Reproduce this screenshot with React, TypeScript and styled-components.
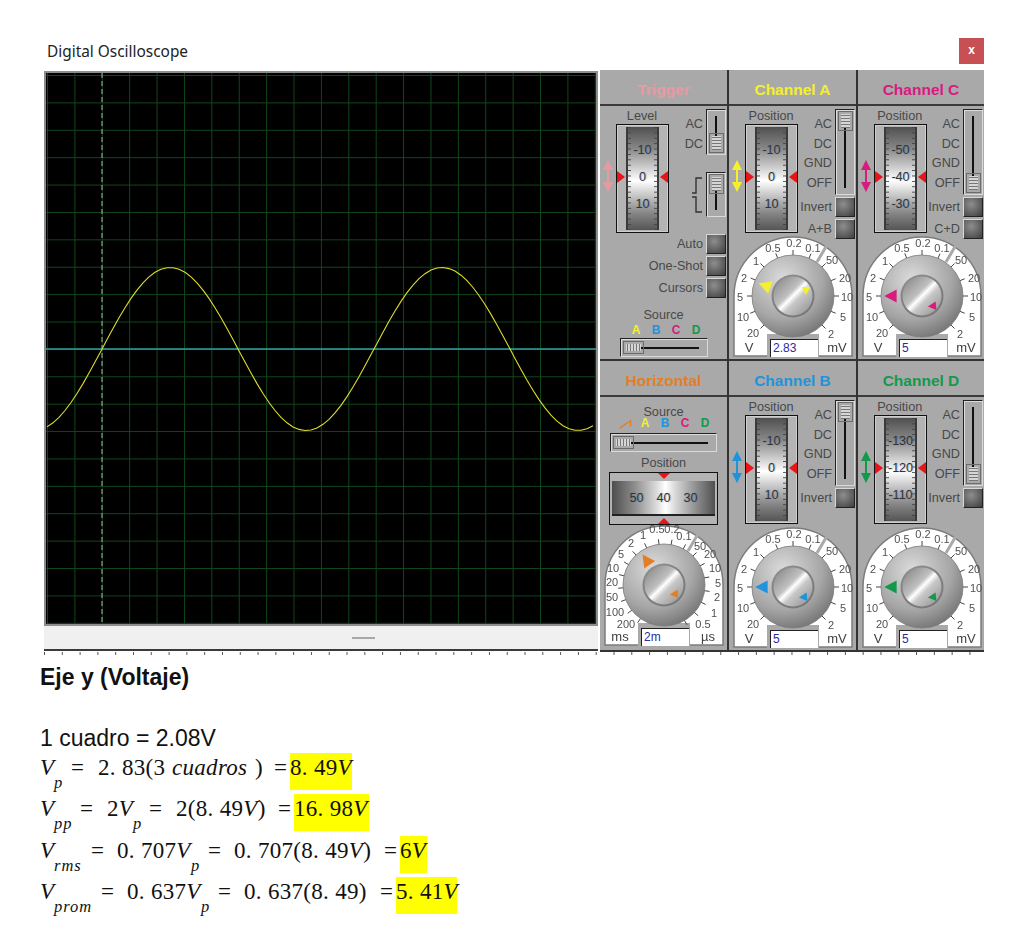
import styled, { createGlobalStyle } from "styled-components";

const GlobalStyle = createGlobalStyle`
  html, body {
    margin: 0;
    background: #ffffff;
  }
  #root {
    width: 1022px;
    height: 942px;
    overflow: hidden;
  }
`;

const COLORS = {
  trigger: "#e79aa2",
  a: "#f4f02e",
  b: "#1f93dc",
  c: "#d81b7f",
  d: "#13994c",
  horizontal: "#e57d26",
};

type DialLabel = [string, number, number];

const voltLabels: DialLabel[] = [
  ["0.2", 1, -53],
  ["0.5", -20, -48],
  ["0.1", 20, -48],
  ["1", -37, -35],
  ["2", -49, -18],
  ["5", -53, 1],
  ["10", -50, 21],
  ["20", -40, 37],
  ["50", 39, -36],
  ["20", 52, -18],
  ["10", 54, 1],
  ["5", 50, 21],
  ["2", 38, 38],
];
const voltTicks = [90, 112, 135, 157, 180, 202, 225, 67, 45, 22, 0, -22, -45];

const timeLabels: DialLabel[] = [
  ["0.5", -7, -56],
  ["0.2", 8, -56],
  ["0.1", 20, -49],
  ["50", 36, -39],
  ["20", 46, -31],
  ["10", 51, -17],
  ["5", 54, -2],
  ["2", 53, 12],
  ["1", 50, 28],
  ["0.5", 39, 39],
  ["1", -21, -50],
  ["2", -33, -42],
  ["5", -43, -31],
  ["10", -51, -17],
  ["20", -52, -3],
  ["50", -52, 12],
  ["100", -49, 27],
  ["200", -38, 39],
];
const timeTicks = [97, 115, 133, 150, 167, 184, 201, 218, 235, 80, 62, 45, 28, 10, -8, -25, -42, -60];

const toPoint = (deg: number, r: number) => {
  const rad = (deg * Math.PI) / 180;
  return [r * Math.cos(rad), -r * Math.sin(rad)];
};

// triangle centred on (cx, cy) whose tip looks along deg
const triangle = (cx: number, cy: number, deg: number, size: number) => {
  const [tx, ty] = toPoint(deg, size * 0.6);
  const [ax, ay] = toPoint(deg + 125, size * 0.62);
  const [bx, by] = toPoint(deg - 125, size * 0.62);
  return `${cx + tx},${cy + ty} ${cx + ax},${cy + ay} ${cx + bx},${cy + by}`;
};

const tracePath = () => {
  const points: string[] = [];
  for (let x = 47; x <= 596; x += 6) {
    const y = 349 - 81.5 * Math.sin((2 * Math.PI * (x - 102)) / 272);
    points.push(`${x},${y.toFixed(1)}`);
  }
  return `M${points.join(" L")}`;
};

function Dial({
  color,
  labels,
  ticks,
  left,
  right,
  value,
  big,
  small,
}: {
  color: string;
  labels: DialLabel[];
  ticks: number[];
  left: string;
  right: string;
  value: string;
  big: [number, number, number];
  small: [number, number, number];
}) {
  return (
    <DialBox>
      <svg width="122" height="124" viewBox="-61 -62 122 124">
        <defs>
          <radialGradient id="knob" cx="38%" cy="30%" r="80%">
            <stop offset="0%" stopColor="#dcdcdc" />
            <stop offset="60%" stopColor="#a6a6a6" />
            <stop offset="100%" stopColor="#6a6a6a" />
          </radialGradient>
          <linearGradient id="cap" x1="0" y1="0" x2="1" y2="1">
            <stop offset="0%" stopColor="#808080" />
            <stop offset="42%" stopColor="#c0c0c0" />
            <stop offset="50%" stopColor="#ffffff" />
            <stop offset="60%" stopColor="#c8c8c8" />
            <stop offset="100%" stopColor="#8a8a8a" />
          </linearGradient>
        </defs>
        <path
          d="M-59 60 V0 A59 59 0 0 1 59 0 V60 Z"
          fill="#ffffff"
          stroke="#7c7c7c"
          strokeWidth="1.5"
        />
        <rect x="-26" y="38" width="52" height="24" fill="#a9a9a9" />
        <line x1="24" y1="-34" x2="34" y2="-51" stroke="#a9a9a9" strokeWidth="3" />
        {ticks.map((deg) => {
          const [x1, y1] = toPoint(deg, 40);
          const [x2, y2] = toPoint(deg, 46);
          return (
            <line key={deg} x1={x1} y1={y1} x2={x2} y2={y2} stroke="#444444" strokeWidth="1" />
          );
        })}
        {labels.map(([text, x, y], i) => (
          <text
            key={i}
            x={x}
            y={y + 4}
            textAnchor="middle"
            fontFamily="'Liberation Sans', sans-serif"
            fontSize="11"
            fill="#505050"
          >
            {text}
          </text>
        ))}
        <text
          x={-44}
          y={56}
          textAnchor="middle"
          fontFamily="'Liberation Sans', sans-serif"
          fontSize="13"
          fill="#404040"
        >
          {left}
        </text>
        <text
          x={44}
          y={56}
          textAnchor="middle"
          fontFamily="'Liberation Sans', sans-serif"
          fontSize="13"
          fill="#404040"
        >
          {right}
        </text>
        <circle r="41" fill="url(#knob)" stroke="#7a7a7a" strokeWidth="0.8" />
        <circle r="21.5" fill="#5c5c5c" opacity="0.6" />
        <circle r="19.5" fill="url(#cap)" />
        <polygon points={triangle(big[0], big[1], big[2], 13)} fill={color} />
        <polygon points={triangle(small[0], small[1], small[2], 8.5)} fill={color} />
      </svg>
      <ValueBox>{value}</ValueBox>
    </DialBox>
  );
}

function Fader({ labels }: { labels: string[] }) {
  return (
    <FaderFrame>
      <Marker $side="left" />
      <Drum>
        {labels.map((label) => (
          <DrumLabel key={label}>{label}</DrumLabel>
        ))}
      </Drum>
      <Marker $side="right" />
    </FaderFrame>
  );
}

function UpDown({ color }: { color: string }) {
  return (
    <ArrowBox>
      <svg width="12" height="32" viewBox="0 0 12 32">
        <path d="M6 0 L11 10 H1 Z M6 32 L11 22 H1 Z" fill={color} />
        <line x1="6" y1="8" x2="6" y2="24" stroke={color} strokeWidth="2" />
      </svg>
    </ArrowBox>
  );
}

function PositionBlock({
  title,
  color,
  labels,
}: {
  title: string;
  color: string;
  labels: string[];
}) {
  return (
    <LeftBlock>
      <Caption $pad={14}>{title}</Caption>
      <FaderRow>
        <UpDown color={color} />
        <Fader labels={labels} />
      </FaderRow>
    </LeftBlock>
  );
}

function Channel({
  name,
  color,
  labels,
  thumb,
  second,
  value,
  big,
  small,
}: {
  name: string;
  color: string;
  labels: string[];
  thumb: "start" | "end";
  second?: string;
  value: string;
  big: [number, number, number];
  small: [number, number, number];
}) {
  return (
    <Cell>
      <Header $color={color}>{name}</Header>
      <Body>
        <TopRow>
          <PositionBlock title="Position" color={color} labels={labels} />
          <RightBlock>
            <SwitchRow>
              <CouplingLabels>
                <span>AC</span>
                <span>DC</span>
                <span>GND</span>
                <span>OFF</span>
              </CouplingLabels>
              <Selector $height={86} $thumb={thumb}>
                <Thumb />
              </Selector>
            </SwitchRow>
            <ButtonRow>
              Invert
              <PushButton />
            </ButtonRow>
            {second && (
              <ButtonRow>
                {second}
                <PushButton />
              </ButtonRow>
            )}
          </RightBlock>
        </TopRow>
        <Dial
          color={color}
          labels={voltLabels}
          ticks={voltTicks}
          left="V"
          right="mV"
          value={value}
          big={big}
          small={small}
        />
      </Body>
    </Cell>
  );
}

function SourceLetters({ ramp }: { ramp?: boolean }) {
  return (
    <Letters $ramp={ramp}>
      {ramp && (
        <svg width="18" height="11" viewBox="0 0 18 12">
          <path d="M2 11 L14 3 V9" fill="none" stroke={COLORS.horizontal} strokeWidth="1.5" />
        </svg>
      )}
      <Letter $color={COLORS.a}>A</Letter>
      <Letter $color={COLORS.b}>B</Letter>
      <Letter $color={COLORS.c}>C</Letter>
      <Letter $color={COLORS.d}>D</Letter>
    </Letters>
  );
}

export default function App() {
  return (
    <Page>
      <GlobalStyle />
      <TitleBar>
        <Title>Digital Oscilloscope</Title>
        <CloseButton>x</CloseButton>
      </TitleBar>
      <Instrument>
        <ScreenColumn>
          <Screen>
            <svg width="550" height="551" viewBox="46 73 550 551">
              <line x1="102" y1="73" x2="102" y2="624" stroke="#b0b0b0" strokeDasharray="5 3" />
              <line x1="46" y1="349" x2="596" y2="349" stroke="#2aa5a5" strokeWidth="1.4" />
              <path d={tracePath()} fill="none" stroke="#dcdc2c" strokeWidth="1.1" />
            </svg>
          </Screen>
          <StatusBar>
            <Grip />
          </StatusBar>
        </ScreenColumn>
        <Controls>
          <Cell>
            <Header $color={COLORS.trigger}>Trigger</Header>
            <Body>
              <TopRow $height={191}>
                <PositionBlock title="Level" color={COLORS.trigger} labels={["-10", "0", "10"]} />
                <RightBlock>
                  <SwitchRow>
                    <CouplingLabels>
                      <span>AC</span>
                      <span>DC</span>
                    </CouplingLabels>
                    <Selector $height={46} $thumb="end">
                      <Thumb />
                    </Selector>
                  </SwitchRow>
                  <EdgeRow>
                    <svg width="12" height="45" viewBox="0 0 12 45">
                      <path
                        d="M1 21 H5 V6 H11 M1 25 H5 V40 H11"
                        fill="none"
                        stroke="#333333"
                        strokeWidth="1.4"
                      />
                    </svg>
                    <Selector $height={45} $thumb="start">
                      <Thumb />
                    </Selector>
                  </EdgeRow>
                  <ButtonStack>
                    <ButtonRow>
                      Auto
                      <PushButton />
                    </ButtonRow>
                    <ButtonRow>
                      One-Shot
                      <PushButton />
                    </ButtonRow>
                    <ButtonRow>
                      Cursors
                      <PushButton />
                    </ButtonRow>
                  </ButtonStack>
                </RightBlock>
              </TopRow>
              <CenteredBlock $top={11}>
                <Caption>Source</Caption>
                <SourceLetters />
                <SlideSwitch $width={88} $top={0}>
                  <SlideThumb />
                </SlideSwitch>
              </CenteredBlock>
            </Body>
          </Cell>
          <Channel
            name="Channel A"
            color={COLORS.a}
            labels={["-10", "0", "10"]}
            thumb="start"
            second="A+B"
            value="2.83"
            big={[-27, -10, 160]}
            small={[13, -6, -90]}
          />
          <Channel
            name="Channel C"
            color={COLORS.c}
            labels={["-50", "-40", "-30"]}
            thumb="end"
            second="C+D"
            value="5"
            big={[-30, 0, 180]}
            small={[11, 10, 185]}
          />
          <Cell>
            <Header $color={COLORS.horizontal}>Horizontal</Header>
            <Body>
              <CenteredBlock $top={10}>
                <Caption $h={11}>Source</Caption>
                <SourceLetters ramp />
                <SlideSwitch $width={107} $top={4}>
                  <SlideThumb />
                </SlideSwitch>
                <Caption $top={4}>Position</Caption>
                <WideFader>
                  <WideMarker $side="top" />
                  <WideDrum>
                    <span>50</span>
                    <span>40</span>
                    <span>30</span>
                  </WideDrum>
                  <WideMarker $side="bottom" />
                </WideFader>
              </CenteredBlock>
              <Dial
                color={COLORS.horizontal}
                labels={timeLabels}
                ticks={timeTicks}
                left="ms"
                right="µs"
                value="2m"
                big={[-17, -24, 125]}
                small={[11, 9, 185]}
              />
            </Body>
          </Cell>
          <Channel
            name="Channel B"
            color={COLORS.b}
            labels={["-10", "0", "10"]}
            thumb="start"
            value="5"
            big={[-30, 0, 180]}
            small={[11, 10, 185]}
          />
          <Channel
            name="Channel D"
            color={COLORS.d}
            labels={["-130", "-120", "-110"]}
            thumb="end"
            value="5"
            big={[-30, 0, 180]}
            small={[11, 10, 185]}
          />
        </Controls>
      </Instrument>
      <RulerTicks />
      <Notes>
        <Heading>Eje y (Voltaje)</Heading>
        <Plain>1 cuadro = 2.08V</Plain>
        <MathLine>
          <Run $w={14} $italic>V</Run>
          <Sub $w={17}>p</Sub>
          <Run $w={27}>=</Run>
          <Run $w={74}>2. 83(3</Run>
          <Run $w={83} $italic>cuadros</Run>
          <Run $w={19}>)</Run>
          <Run $w={16}>=</Run>
          <Mark $w={62}>8. 49<i>V</i></Mark>
        </MathLine>
        <MathLine>
          <Run $w={14} $italic>V</Run>
          <Sub $w={26}>pp</Sub>
          <Run $w={27}>=</Run>
          <Run $w={26}>2<i>V</i></Run>
          <Sub $w={16}>p</Sub>
          <Run $w={27}>=</Run>
          <Run $w={102}>2(8. 49<i>V</i>)</Run>
          <Run $w={16}>=</Run>
          <Mark $w={75}>16. 98<i>V</i></Mark>
        </MathLine>
        <MathLine>
          <Run $w={14} $italic>V</Run>
          <Sub $w={37}>rms</Sub>
          <Run $w={26}>=</Run>
          <Run $w={74}>0. 707<i>V</i></Run>
          <Sub $w={17}>p</Sub>
          <Run $w={26}>=</Run>
          <Run $w={150}>0. 707(8. 49<i>V</i>)</Run>
          <Run $w={16}>=</Run>
          <Mark $w={27}>6<i>V</i></Mark>
        </MathLine>
        <MathLine>
          <Run $w={14} $italic>V</Run>
          <Sub $w={47}>prom</Sub>
          <Run $w={26}>=</Run>
          <Run $w={74}>0. 637<i>V</i></Run>
          <Sub $w={17}>p</Sub>
          <Run $w={26}>=</Run>
          <Run $w={136}>0. 637(8. 49)</Run>
          <Run $w={16}>=</Run>
          <Mark $w={61}>5. 41<i>V</i></Mark>
        </MathLine>
      </Notes>
    </Page>
  );
}

const Page = styled.div`
  width: 1022px;
  height: 942px;
  padding-top: 38px;
  box-sizing: border-box;
  background: #ffffff;
  font-family: "Liberation Sans", sans-serif;
`;

const TitleBar = styled.div`
  display: flex;
  justify-content: space-between;
  align-items: flex-start;
  height: 32px;
  margin: 0 38px 0 47px;
`;

const Title = styled.div`
  font-family: "Noto Sans", "Open Sans", sans-serif;
  font-size: 15.4px;
  line-height: 27px;
  color: #222222;
`;

const CloseButton = styled.div`
  width: 25px;
  height: 26px;
  background: #c75054;
  color: #ffffff;
  font-size: 12px;
  font-weight: 700;
  line-height: 25px;
  text-align: center;
`;

const Instrument = styled.div`
  display: flex;
  width: 940px;
  margin-left: 44px;
  height: 582px;
  filter: blur(0.35px);
`;

const ScreenColumn = styled.div`
  width: 556px;
  padding-top: 1px;
  box-sizing: border-box;
`;

const Screen = styled.div`
  position: relative;
  width: 554px;
  height: 555px;
  box-sizing: border-box;
  border: 2px solid #8d8d8d;
  overflow: hidden;
  background-color: #000000;
  background-image: linear-gradient(to right, #10471a 1.4px, transparent 1.4px),
    linear-gradient(to bottom, #10471a 1.4px, transparent 1.4px);
  background-size: 27.4px 27.4px;
  background-position: 1px 2px;

  svg {
    display: block;
  }
`;

const StatusBar = styled.div`
  display: flex;
  align-items: center;
  justify-content: center;
  width: 554px;
  height: 25px;
  background: #f0f0f0;
  border-bottom: 2px solid #3a3a3a;
  box-sizing: border-box;
  padding-left: 85px;
`;

const Grip = styled.div`
  width: 23px;
  height: 2px;
  background: #a8a8a8;
`;

const RulerTicks = styled.div`
  width: 940px;
  height: 3px;
  margin-left: 44px;
  background-image: linear-gradient(to right, #555555 1px, transparent 1px);
  background-size: 17.8px 3px;
`;

const Controls = styled.div`
  display: grid;
  grid-template-columns: 129px 129px 126px;
  grid-template-rows: 291px 291px;
  background: #a9a9a9;
`;

const Cell = styled.div`
  background: #a9a9a9;
  border-right: 2px solid #333333;
  border-bottom: 2px solid #333333;
  box-sizing: border-box;
  overflow: hidden;
  color: #484848;
  font-size: 12.7px;

  &:nth-child(3n) {
    border-right: 0;
  }
`;

const Header = styled.div<{ $color: string }>`
  height: 36px;
  box-sizing: border-box;
  border-bottom: 2px solid #3a3a3a;
  color: ${(p) => p.$color};
  font-size: 15.5px;
  font-weight: 700;
  line-height: 39px;
  text-align: center;
`;

const Body = styled.div`
  display: flex;
  flex-direction: column;
`;

const TopRow = styled.div<{ $height?: number }>`
  display: flex;
  height: ${(p) => p.$height ?? 130}px;
`;

const LeftBlock = styled.div`
  width: 70px;
  padding-top: 3px;
  box-sizing: border-box;
`;

const Caption = styled.div<{ $top?: number; $pad?: number; $h?: number }>`
  height: ${(p) => p.$h ?? 15}px;
  margin-top: ${(p) => p.$top ?? 0}px;
  padding-left: ${(p) => p.$pad ?? 0}px;
  line-height: ${(p) => p.$h ?? 15}px;
  text-align: center;
`;

const FaderRow = styled.div`
  display: flex;
  align-items: flex-start;
`;

const ArrowBox = styled.div`
  display: flex;
  justify-content: center;
  width: 16px;
  padding-top: 36px;
`;

const FaderFrame = styled.div`
  position: relative;
  width: 53px;
  height: 109px;
  box-sizing: border-box;
  padding: 2px 9px;
  background: #b4b4b4;
  border: 1px solid #111111;
  outline: 1px solid #cfcfcf;
  outline-offset: -2px;
`;

const Marker = styled.div<{ $side: "left" | "right" }>`
  position: absolute;
  top: 46px;
  ${(p) => p.$side}: 0;
  width: 0;
  height: 0;
  border-top: 6px solid transparent;
  border-bottom: 6px solid transparent;
  ${(p) => (p.$side === "left" ? "border-left: 8px solid #e8141a;" : "border-right: 8px solid #e8141a;")}
`;

const Drum = styled.div`
  position: relative;
  display: flex;
  flex-direction: column;
  justify-content: center;
  height: 103px;
  padding-bottom: 3px;
  box-sizing: border-box;
  border-left: 2px solid #3a3a3a;
  border-right: 2px solid #3a3a3a;
  background: linear-gradient(
    to bottom,
    #505050 0%,
    #858585 20%,
    #d0d0d0 40%,
    #ffffff 52%,
    #d0d0d0 64%,
    #858585 84%,
    #555555 100%
  );

  &::before,
  &::after {
    content: "";
    position: absolute;
    top: 0;
    bottom: 0;
    width: 3px;
    background-image: linear-gradient(to bottom, #444444 1px, transparent 1px);
    background-size: 3px 5.4px;
  }
  &::before {
    left: 0;
  }
  &::after {
    right: 0;
  }
`;

const DrumLabel = styled.div`
  height: 27px;
  line-height: 27px;
  text-align: center;
  font-size: 12.5px;
  color: #333333;
  text-shadow: 1px 0 1px rgba(40, 110, 170, 0.45);
`;

const RightBlock = styled.div`
  width: 57px;
  padding-top: 3px;
  box-sizing: border-box;
`;

const SwitchRow = styled.div`
  display: flex;
  justify-content: flex-end;
  padding-right: 1px;
`;

const CouplingLabels = styled.div`
  display: flex;
  flex-direction: column;
  align-items: flex-end;
  margin-right: 3px;
  padding-top: 6px;

  span {
    height: 19.5px;
    line-height: 19.5px;
  }
`;

const Selector = styled.div<{ $height: number; $thumb: "start" | "end" }>`
  position: relative;
  display: flex;
  flex-direction: column;
  align-items: center;
  justify-content: flex-${(p) => p.$thumb};
  width: 20px;
  height: ${(p) => p.$height}px;
  box-sizing: border-box;
  padding: 1px 0;
  background: #a9a9a9;
  border: 1px solid #222222;
  border-right-color: #dadada;
  border-bottom-color: #dadada;
  box-shadow: inset 1px 1px 0 #dcdcdc;

  &::before {
    content: "";
    position: absolute;
    top: 6px;
    bottom: 6px;
    left: 50%;
    width: 2px;
    margin-left: -1px;
    background: #111111;
  }
`;

const Thumb = styled.div`
  position: relative;
  width: 15px;
  height: 20px;
  box-sizing: border-box;
  border: 1px solid #6c6c6c;
  background-color: #c6c6c6;
  background-image: repeating-linear-gradient(to bottom, #777777 0 1px, #d6d6d6 1px 3px);
  background-clip: content-box;
  padding: 2px;
`;

const ButtonRow = styled.div`
  display: flex;
  justify-content: flex-end;
  align-items: center;
  gap: 3px;
  height: 20px;
  margin-top: 2px;
  padding-right: 1px;
  white-space: nowrap;
`;

const PushButton = styled.div`
  flex: none;
  width: 20px;
  height: 20px;
  box-sizing: border-box;
  border: 1px solid #222222;
  border-top-color: #d8d8d8;
  border-left-color: #d8d8d8;
  background: radial-gradient(circle at 40% 35%, #8e8e8e, #565656 70%, #3e3e3e);
`;

const EdgeRow = styled.div`
  display: flex;
  justify-content: flex-end;
  align-items: center;
  gap: 3px;
  margin-top: 17px;
  padding-right: 1px;
`;

const ButtonStack = styled.div`
  display: flex;
  flex-direction: column;
  margin-top: 15px;
`;

const CenteredBlock = styled.div<{ $top: number }>`
  display: flex;
  flex-direction: column;
  align-items: center;
  margin-top: ${(p) => p.$top}px;
`;

const Letters = styled.div<{ $ramp?: boolean }>`
  display: flex;
  align-items: center;
  height: ${(p) => (p.$ramp ? 11 : 15)}px;
  padding-left: 5px;
`;

const Letter = styled.span<{ $color: string }>`
  width: 20px;
  text-align: center;
  font-weight: 700;
  font-size: 12px;
  line-height: 11px;
  color: ${(p) => p.$color};
`;

const SlideSwitch = styled.div<{ $width: number; $top: number }>`
  position: relative;
  display: flex;
  align-items: center;
  width: ${(p) => p.$width}px;
  height: 19px;
  box-sizing: border-box;
  padding: 0 2px;
  margin-top: ${(p) => p.$top}px;
  border: 1px solid #222222;
  border-right-color: #dadada;
  border-bottom-color: #dadada;
  box-shadow: inset 1px 1px 0 #dcdcdc;

  &::before {
    content: "";
    position: absolute;
    left: 6px;
    right: 8px;
    top: 8px;
    height: 2px;
    background: #111111;
  }
`;

const SlideThumb = styled.div`
  position: relative;
  width: 21px;
  height: 13px;
  box-sizing: border-box;
  border: 1px solid #6c6c6c;
  padding: 2px;
  background-color: #c6c6c6;
  background-image: repeating-linear-gradient(to right, #777777 0 1px, #d6d6d6 1px 3px);
  background-clip: content-box;
`;

const WideFader = styled.div`
  position: relative;
  width: 109px;
  height: 53px;
  margin-top: 1px;
  box-sizing: border-box;
  padding: 8px 2px 8px;
  background: #b4b4b4;
  border: 1px solid #111111;
`;

const WideMarker = styled.div<{ $side: "top" | "bottom" }>`
  position: absolute;
  left: 50%;
  margin-left: -6px;
  ${(p) => p.$side}: 0;
  width: 0;
  height: 0;
  border-left: 6px solid transparent;
  border-right: 6px solid transparent;
  ${(p) => (p.$side === "top" ? "border-top: 6px solid #e8141a;" : "border-bottom: 6px solid #e8141a;")}
`;

const WideDrum = styled.div`
  display: flex;
  justify-content: center;
  align-items: center;
  height: 35px;
  box-sizing: border-box;
  border-bottom: 2px solid #222222;
  font-size: 12.5px;
  color: #333333;
  background: linear-gradient(
    to right,
    #4e4e4e 0%,
    #8d8d8d 22%,
    #d6d6d6 42%,
    #ffffff 52%,
    #d6d6d6 62%,
    #8d8d8d 82%,
    #505050 100%
  );

  span {
    width: 27px;
    text-align: center;
    text-shadow: 1px 0 1px rgba(40, 110, 170, 0.45);
  }
`;

const DialBox = styled.div`
  position: relative;
  flex: none;
  width: 122px;
  height: 124px;
  margin: -2px 0 0 3px;

  svg {
    display: block;
  }
`;

const ValueBox = styled.div`
  position: absolute;
  left: 38px;
  top: 105px;
  width: 48px;
  height: 18px;
  box-sizing: border-box;
  padding-left: 2px;
  background: #ffffff;
  border-top: 1px solid #222222;
  border-left: 1px solid #222222;
  color: #2b2ba0;
  font-size: 12px;
  line-height: 17px;
`;

const Notes = styled.div`
  padding: 9px 0 0 40px;
`;

const Heading = styled.div`
  height: 26px;
  font-size: 23px;
  font-weight: 700;
  line-height: 26px;
  color: #111111;
`;

const Plain = styled.div`
  height: 26px;
  margin: 35px 0 2px;
  font-size: 23px;
  line-height: 26px;
  color: #111111;
`;

const MathLine = styled.div`
  display: flex;
  height: 37px;
  margin-bottom: 4.3px;
  font-family: "Liberation Serif", serif;
  color: #111111;
`;

const Run = styled.span<{ $w: number; $italic?: boolean }>`
  flex: none;
  width: ${(p) => p.$w}px;
  font-size: 23px;
  line-height: 30px;
  letter-spacing: 0.3px;
  white-space: pre;
  font-style: ${(p) => (p.$italic ? "italic" : "normal")};
`;

const Sub = styled.span<{ $w: number }>`
  flex: none;
  width: ${(p) => p.$w}px;
  align-self: flex-end;
  font-size: 16.5px;
  font-style: italic;
  line-height: 14px;
  letter-spacing: 1px;
`;

const Mark = styled(Run)`
  background: #ffff00;
`;
